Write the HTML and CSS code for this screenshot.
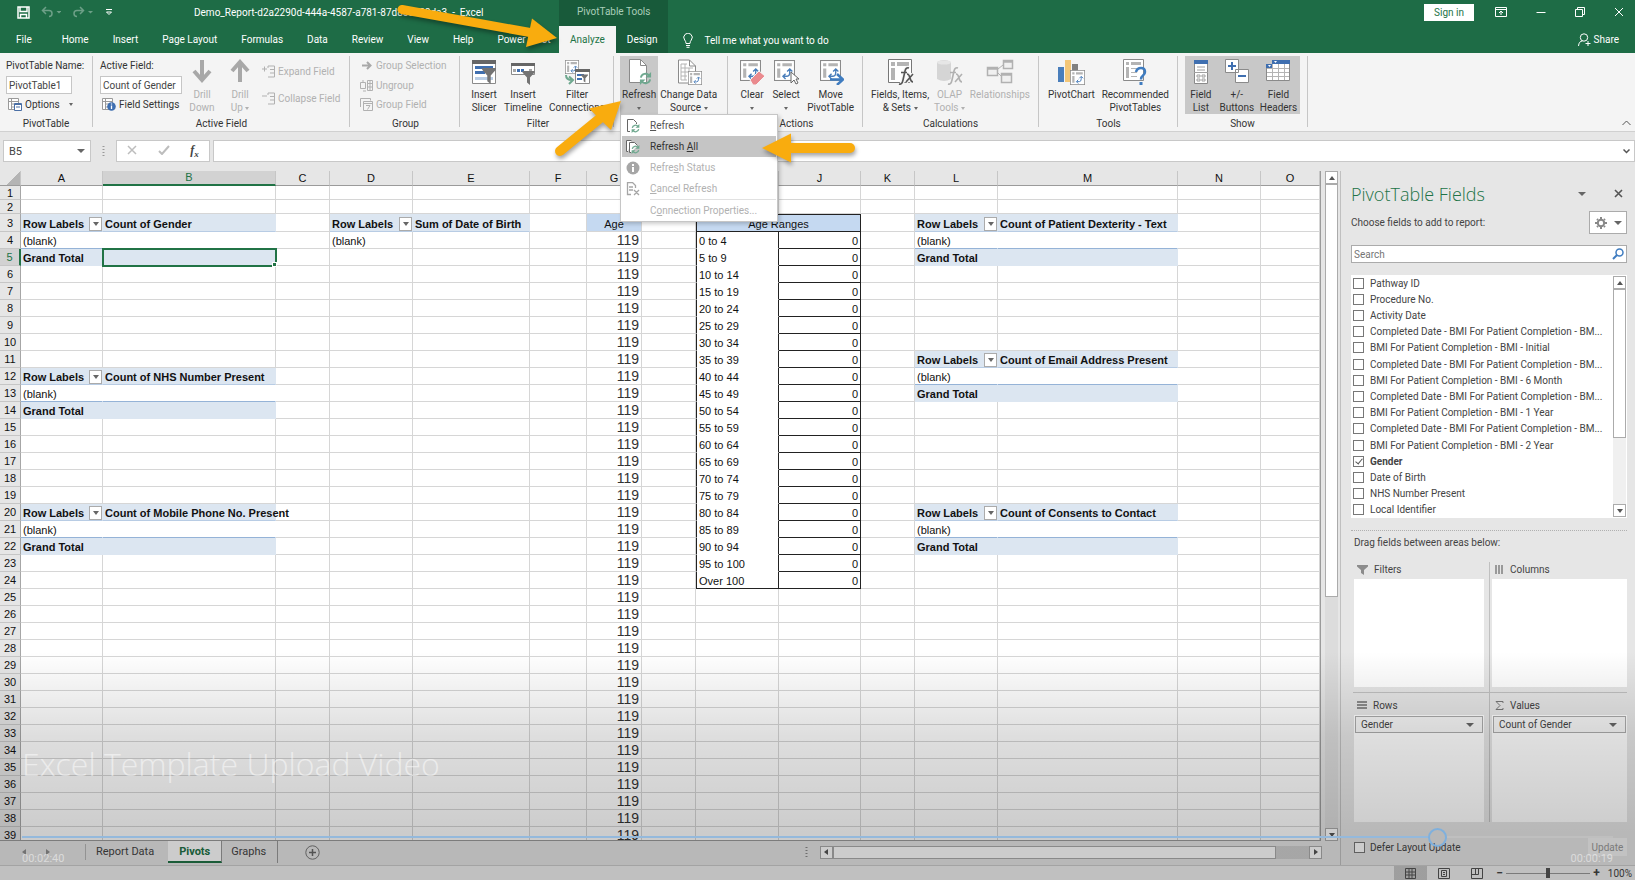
FILE: index.html
```html
<!DOCTYPE html>
<html lang="en">
<head>
    <meta charset="UTF-8">
    <title>Demo_Report - Excel</title>
    <link rel="stylesheet" href="styles.css">
</head>
<body>
<svg class="defs" width="0" height="0">
    <symbol id="pivot" viewBox="0 0 20 20">
        <rect x=".5" y=".5" width="19" height="19" fill="#fff" stroke="#8a8a8a"/>
        <path d="M3 3h3v3H3zM8 3h9v3H8zM3 8h3v9H3z" fill="#b4b4b4"/>
        <path d="M9 15.500h3.500q2.500 0 2.500-4V9M11 13l-2.500 2.500L11 18M12.500 11L15 8.500l2.500 2.500" fill="none" stroke="#4a7ebb" stroke-width="1.300"/>
    </symbol>
    <symbol id="cycle" viewBox="0 0 14 14">
        <path d="M2 6a5 5 0 0 1 9-2M12 8a5 5 0 0 1-9 2" fill="none" stroke="#6fa88f" stroke-width="2"/>
        <path d="M13 0v6H7zM1 14V8h6z" fill="#6fa88f"/>
    </symbol>
    <symbol id="page" viewBox="0 0 18 24">
        <path d="M.5.5h11l6 6v17H.5z" fill="#fff" stroke="#8a8a8a"/>
        <path d="M11.500.5v6h6" fill="none" stroke="#8a8a8a"/>
    </symbol>
    <symbol id="funnel" viewBox="0 0 12 14">
        <path d="M0 0h12v1.500L7.500 6.500V14L4.500 11.500v-5L0 1.500z" fill="#737373"/>
    </symbol>
</svg>

<header class="titlebar">
    <div class="head-left">
        <div class="quick">
            <button class="qbtn" aria-label="Save"><svg width="13" height="13" viewBox="0 0 13 13"><path d="M1 1h11v11H1zM3 1v4.500h7V1M3.500 12V8.500h6V12" fill="none" stroke="#fff" stroke-width="1.500"/></svg></button>
            <button class="qbtn dim" aria-label="Undo"><svg width="20" height="12" viewBox="0 0 20 12"><path d="M5 1L1.500 4.500 5 8M2 4.500h6q3 0 3 3t-3 3" fill="none" stroke="#fff" stroke-width="1.500"/><path d="M15.500 5h5l-2.500 2.500z" fill="#fff"/></svg></button>
            <button class="qbtn dim" aria-label="Redo"><svg width="22" height="12" viewBox="0 0 22 12"><path d="M8 1l3.500 3.500L8 8M11 4.500H5q-3 0-3 3t3 3" fill="none" stroke="#fff" stroke-width="1.500"/><path d="M16 5h5l-2.500 2.500z" fill="#fff"/></svg></button>
            <button class="qbtn" aria-label="Customize"><svg width="8" height="7" viewBox="0 0 8 7"><path d="M1 .5h6M1.500 3h5L4 5.500z" fill="none" stroke="#fff"/></svg></button>
            <span class="doc-title">Demo_Report-d2a2290d-444a-4587-a781-87d8c5b28da3 &nbsp;-&nbsp; Excel</span>
        </div>
        <nav class="tabs">
            <a href="#" class="file">File</a>
            <a href="#">Home</a>
            <a href="#">Insert</a>
            <a href="#">Page Layout</a>
            <a href="#">Formulas</a>
            <a href="#">Data</a>
            <a href="#">Review</a>
            <a href="#">View</a>
            <a href="#">Help</a>
            <a href="#">Power Pivot</a>
        </nav>
    </div>
    <div class="head-context">
        <div class="context-title">PivotTable Tools</div>
        <nav class="tabs">
            <a href="#" class="active">Analyze</a>
            <a href="#">Design</a>
        </nav>
    </div>
    <div class="head-right">
        <div class="window-row">
            <button class="signin">Sign in</button>
            <button class="win" aria-label="Ribbon display"><svg width="12" height="10" viewBox="0 0 12 10"><path d="M.5.5h11v9H.5zM.5 2.500h11M6 8V4.500M4 6l2-2 2 2" fill="none" stroke="#fff"/></svg></button>
            <button class="win" aria-label="Minimize"><svg width="10" height="10" viewBox="0 0 10 10"><path d="M.5 5.500h9" stroke="#fff"/></svg></button>
            <button class="win" aria-label="Restore"><svg width="10" height="10" viewBox="0 0 10 10"><path d="M.5 2.500h7v7h-7zM2.500 2.500v-2h7v7h-2" fill="none" stroke="#fff"/></svg></button>
            <button class="win" aria-label="Close"><svg width="10" height="10" viewBox="0 0 10 10"><path d="M1 1l8 8M9 1L1 9" stroke="#fff"/></svg></button>
        </div>
        <div class="tell-row">
            <svg width="10" height="15" viewBox="0 0 10 15"><path d="M3 10.500Q3 8.500 1.700 7A4.200 4.200 0 1 1 8.300 7Q7 8.500 7 10.500zM3 12.500h4M3.500 14.300h3" fill="none" stroke="#fff"/></svg>
            <a href="#">Tell me what you want to do</a>
            <a href="#" class="share"><svg width="13" height="14" viewBox="0 0 13 14"><circle cx="6" cy="4.500" r="3.700" fill="none" stroke="#fff"/><path d="M.5 13q.5-5 4-5M7.500 10.500h5M10 8v5" fill="none" stroke="#fff"/></svg>Share</a>
        </div>
    </div>
</header>

<section class="ribbon">
    <div class="group g-name">
        <div class="body">
            <div class="stack">
                <label for="ptname">PivotTable Name:</label>
                <input id="ptname" class="name-input" value="PivotTable1">
                <button class="small"><svg width="14" height="13" viewBox="0 0 14 13"><path d="M.5.5h10v11H.5zM.5 3.500h10M3.500.5v11M3.500 6h7M3.500 9h7" fill="#fff" stroke="#9a9a9a"/><path d="M6.500 5.500h7v7h-7z" fill="#fff" stroke="#4a6fa5"/><path d="M6.500 6.500h7M8 9h4" stroke="#4a6fa5"/></svg>Options<i class="caret far"></i></button>
            </div>
        </div>
        <div class="caption">PivotTable</div>
    </div>
    <div class="group g-active">
        <div class="body">
            <div class="stack">
                <label for="afield">Active Field:</label>
                <input id="afield" class="field-input" value="Count of Gender">
                <button class="small"><svg width="14" height="13" viewBox="0 0 14 13"><path d="M.5.5h10v11H.5zM.5 3.500h10M3.500.5v11M3.500 6h7M3.500 9h7" fill="#fff" stroke="#9a9a9a"/><circle cx="9.500" cy="8.500" r="4.300" fill="#3f6fb0"/><path d="M9.500 7.500v3.500M9.500 5.500v1" stroke="#fff" stroke-width="1.300"/></svg>Field Settings</button>
            </div>
            <button class="big off drill"><svg width="20" height="26" viewBox="0 0 20 26"><path d="M10 1v19M2 12l8 9 8-9" fill="none" stroke="#a8a8a8" stroke-width="4"/></svg><span>Drill<br>Down</span></button>
            <button class="big off drill"><svg width="20" height="26" viewBox="0 0 20 26"><path d="M10 23V4M2 12l8-9 8 9" fill="none" stroke="#a8a8a8" stroke-width="4"/></svg><span>Drill<br>Up <i class="caret"></i></span></button>
            <div class="stack two">
                <button class="small off"><svg width="13" height="13" viewBox="0 0 13 13"><path d="M0 4h5M2.500 1.500v5M6 1h6.500M8 4.500h4.500M8 8h4.500M6 12h6.500M6 1v2M12.500 1v11" fill="none" stroke="#b1b1b1"/></svg>Expand Field</button>
                <button class="small off"><svg width="13" height="13" viewBox="0 0 13 13"><path d="M0 4h5M6 1h6.500M8 4.500h4.500M8 8h4.500M6 12h6.500M6 1v2M12.500 1v11" fill="none" stroke="#b1b1b1"/></svg>Collapse Field</button>
            </div>
        </div>
        <div class="caption">Active Field</div>
    </div>
    <div class="group g-group">
        <div class="body">
            <div class="stack">
                <button class="small off"><svg width="13" height="13" viewBox="0 0 13 13"><path d="M2 6.500h8M7 3l3.500 3.500L7 10" fill="none" stroke="#a8a8a8" stroke-width="2"/></svg>Group Selection</button>
                <button class="small off"><svg width="13" height="13" viewBox="0 0 13 13"><path d="M.5 3.500h5v6h-5zM7.500 1.500h5v10h-5zM7.500 4.500h5M7.500 8h5M10 1.500v10M3 1v2M3 12h3" fill="none" stroke="#b1b1b1"/></svg>Ungroup</button>
                <button class="small off"><svg width="13" height="13" viewBox="0 0 13 13"><path d="M.5 9V.5h10v2M3.500 3.500h9v9h-9zM3.500 5.500h9M6 7.500h4l-2.500 4" fill="none" stroke="#b1b1b1"/></svg>Group Field</button>
            </div>
        </div>
        <div class="caption">Group</div>
    </div>
    <div class="group g-filter">
        <div class="body">
            <button class="big"><svg width="26" height="26" viewBox="0 0 26 26"><path d="M1.500 1.500h23v23h-23z" fill="#fff" stroke="#8a8a8a"/><path d="M1 1h24v4H1z" fill="#666"/><path d="M4 7h18v3H4zM4 12h10v3H4z" fill="#3f6fb0"/><path d="M4 18h18v3H4z" fill="#b9cde5"/><use href="#funnel" x="11" y="9" width="14" height="16"/></svg><span>Insert<br>Slicer</span></button>
            <button class="big"><svg width="26" height="26" viewBox="0 0 26 26"><path d="M1.500 4.500h23v11h-23z" fill="#fff" stroke="#8a8a8a"/><path d="M1 4h24v3H1z" fill="#666"/><path d="M3 10h3v3H3zM19 10h3v3h-3z" fill="#a6a6a6"/><path d="M7 10h3v3H7zM11 10h3v3h-3z" fill="#3f6fb0"/><use href="#funnel" x="12" y="12" width="13" height="14"/></svg><span>Insert<br>Timeline</span></button>
            <button class="big"><svg width="26" height="26" viewBox="0 0 26 26"><use href="#pivot" x="1" y="1" width="14" height="14"/><path d="M11.500 10.500h14v14h-14z" fill="#fff" stroke="#8a8a8a"/><path d="M11 10h15v3H11z" fill="#666"/><path d="M13 15h7v2h-7zM13 19h5v2h-5z" fill="#3f6fb0"/><use href="#funnel" x="17" y="15" width="7" height="9"/><path d="M2 16q0 5 6 5M5 17.500L9 21l-4 4" fill="none" stroke="#6fa88f" stroke-width="2"/></svg><span>Filter<br>Connections</span></button>
        </div>
        <div class="caption">Filter</div>
    </div>
    <div class="group g-data">
        <div class="body">
            <div class="menu-host">
                <button class="big pressed"><svg width="26" height="26" viewBox="0 0 26 26"><use href="#page" x="3" y="0" width="18" height="24"/><use href="#cycle" x="13" y="13" width="13" height="13"/></svg><span>Refresh<br><i class="caret"></i></span></button>
                <div class="menu">
                    <button><svg width="14" height="14" viewBox="0 0 14 14"><path d="M4 12.500H1.500v-12h6l3 3V5" fill="#fff" stroke="#666"/><use href="#cycle" x="5" y="5" width="9" height="9"/></svg><span><u>R</u>efresh</span></button>
                    <button class="hover"><svg width="14" height="14" viewBox="0 0 14 14"><path d="M2 11.500H.5V.5h5M5 12.500H3.500v-10h5l3 3" fill="#fff" stroke="#666"/><use href="#cycle" x="5" y="5" width="9" height="9"/></svg><span>Refresh <u>A</u>ll</span></button>
                    <button class="off"><svg width="14" height="14" viewBox="0 0 14 14"><circle cx="7" cy="7" r="6.500" fill="#a6a6a6"/><path d="M7 6v5M7 3v2" stroke="#fff" stroke-width="2"/></svg><span>Refre<u>s</u>h Status</span></button>
                    <button class="off"><svg width="14" height="14" viewBox="0 0 14 14"><path d="M5 12.500H1.500v-12h5l3 3V6M3 5h4M3 8h4M8 8l5 5M13 8l-5 5" fill="none" stroke="#a6a6a6" stroke-width="1.300"/></svg><span><u>C</u>ancel Refresh</span></button>
                    <hr>
                    <button class="off"><i class="blank"></i><span>C<u>o</u>nnection Properties...</span></button>
                </div>
            </div>
            <button class="big"><svg width="26" height="26" viewBox="0 0 26 26"><use href="#page" x="2" y="0" width="18" height="25"/><path d="M5 5h6M5 9h12M5 13h8M5 17h6M5 21h6M5 5v16M9 5v16M13 9v4" stroke="#b4b4b4"/><use href="#pivot" x="12" y="12" width="14" height="14"/></svg><span>Change Data<br>Source <i class="caret"></i></span></button>
        </div>
    </div>
    <div class="group g-actions">
        <div class="body">
            <button class="big"><svg width="26" height="26" viewBox="0 0 26 26"><use href="#pivot" x="1" y="1" width="21" height="21"/><path d="M11 21l9-9 6 5-9 9h-3z" fill="#ea8a8e" stroke="#f5f5f5"/></svg><span>Clear<br><i class="caret"></i></span></button>
            <button class="big"><svg width="26" height="26" viewBox="0 0 26 26"><use href="#pivot" x="1" y="1" width="21" height="21"/><path d="M18 13v11l3-3 2 4 2-1-2-4h3z" fill="#fff" stroke="#666"/></svg><span>Select<br><i class="caret"></i></span></button>
            <button class="big"><svg width="26" height="26" viewBox="0 0 26 26"><use href="#pivot" x="2" y="1" width="21" height="21"/><path d="M12 20.500h12M19 15l6 5.500-6 5.500" fill="none" stroke="#3f7cc0" stroke-width="2.500"/></svg><span>Move<br>PivotTable</span></button>
        </div>
        <div class="caption">Actions</div>
    </div>
    <div class="group g-calc">
        <div class="body">
            <button class="big"><svg width="28" height="26" viewBox="0 0 28 26"><path d="M2.500.5h23v23h-23z" fill="#fff" stroke="#777"/><path d="M5 3h4v4H5zM11 3h12v4H11zM5 9h4v12H5z" fill="#b4b4b4"/><path d="M13 25q3 2 4-4l2-9q1-4 4-3M15 13.500h6M20 23l7-8M21 15q2 0 3 4t3 4" fill="none" stroke="#f5f5f5" stroke-width="4"/><path d="M13 25q3 1 4-4l2-9q1-4 4-3M15 13.500h6M20 23l7-8M21 15q2 0 3 4t3 4" fill="none" stroke="#555" stroke-width="1.600"/></svg><span>Fields, Items,<br>&amp; Sets <i class="caret"></i></span></button>
            <button class="big off"><svg width="28" height="26" viewBox="0 0 28 26"><path d="M2 3q7-4 14 0v17q-7 4-14 0z" fill="#d5d5d5"/><ellipse cx="9" cy="3.500" rx="7" ry="2" fill="#e6e6e6"/><path d="M13 25q3 1 4-4l2-9q1-4 4-3M15 13.500h6M20 23l7-8M21 15q2 0 3 4t3 4" fill="none" stroke="#b1b1b1" stroke-width="1.600"/></svg><span>OLAP<br>Tools <i class="caret"></i></span></button>
            <button class="big off"><svg width="28" height="26" viewBox="0 0 28 26"><path d="M1.500 8.500h10v8h-10zM17.500 1.500h9v8h-9zM15.500 14.500h10v9h-10zM1 10h11M17 3h10M15 16h11" fill="#f0f0f0" stroke="#b1b1b1" stroke-width="1.500"/><path d="M12 10l5-4M12 14l4 4" stroke="#b1b1b1"/></svg><span>Relationships</span></button>
        </div>
        <div class="caption">Calculations</div>
    </div>
    <div class="group g-tools">
        <div class="body">
            <button class="big"><svg width="28" height="26" viewBox="0 0 28 26"><path d="M1 8h6v15H1z" fill="#4a7ebb"/><path d="M8 1h6v22H8z" fill="#f3c677"/><path d="M15 5h6v8h-6z" fill="#808080"/><use href="#pivot" x="13" y="11" width="15" height="15"/></svg><span>PivotChart</span></button>
            <button class="big"><svg width="28" height="26" viewBox="0 0 28 26"><path d="M2.500.5h20v21h-20z" fill="#fff" stroke="#8a8a8a"/><path d="M5 3h3v3H5zM10 3h10v3H10zM5 8h3v11H5zM10 9h10v1H10zM10 13h6v1h-6zM10 17h6v1h-6z" fill="#b4b4b4"/><path d="M15 13q1-4 5-4t4 4q0 2-2 3.500t-2 4" fill="none" stroke="#3f7cc0" stroke-width="2.500"/><path d="M18.500 23h3v3h-3z" fill="#3f7cc0"/></svg><span>Recommended<br>PivotTables</span></button>
        </div>
        <div class="caption">Tools</div>
    </div>
    <div class="group g-show">
        <div class="body">
            <button class="big pressed"><svg width="26" height="26" viewBox="0 0 26 26"><path d="M6.500 1.500h13v23h-13z" fill="#fff" stroke="#8a8a8a"/><path d="M6 1h14v4H6z" fill="#3f6fb0"/><path d="M9 8h8M9 11h8M6 13.500h14M9 16h3v2H9zM14 16h3v2h-3zM9 20h3v2H9zM14 20h3v2h-3z" fill="none" stroke="#a0a0a0"/></svg><span>Field<br>List</span></button>
            <button class="big pressed"><svg width="26" height="26" viewBox="0 0 26 26"><path d="M1.500.5h13v13h-13zM11.500 10.500h13v13h-13z" fill="#fff" stroke="#8a8a8a"/><path d="M4 7h8M8 3v8M14 17h8" stroke="#3f6fb0" stroke-width="2"/></svg><span>+/-<br>Buttons</span></button>
            <button class="big pressed"><svg width="26" height="26" viewBox="0 0 26 26"><path d="M1.500 5.500h6v-4h17v20h-23z" fill="#fff" stroke="#8a8a8a"/><path d="M1 5h6v4H1zM7 1h18v4H7z" fill="#3f6fb0"/><path d="M3 6h3L4.500 8zM9 2h3l-1.500 2z" fill="#fff"/><path d="M2 9.500h22M2 13.500h22M2 17.500h22M7.500 5v16M13.500 5v16M19.500 5v16" stroke="#b4b4b4"/></svg><span>Field<br>Headers</span></button>
        </div>
        <div class="caption">Show</div>
    </div>
    <button class="collapse" aria-label="Collapse ribbon"><svg width="9" height="6" viewBox="0 0 9 6"><path d="M.5 5l4-4 4 4" fill="none" stroke="#555"/></svg></button>
</section>

<section class="formula">
    <label class="namebox"><input value="B5" aria-label="Name box"><i class="caret big-caret"></i></label>
    <svg class="dots" width="3" height="12" viewBox="0 0 3 12"><path d="M1.500 1v10" stroke="#999" stroke-width="2" stroke-dasharray="1 2"/></svg>
    <div class="fx">
        <button aria-label="Cancel"><svg width="10" height="10" viewBox="0 0 10 10"><path d="M1 1l8 8M9 1L1 9" stroke="#bdbdbd" stroke-width="1.500"/></svg></button>
        <button aria-label="Enter"><svg width="12" height="10" viewBox="0 0 12 10"><path d="M1 6l3 3 7-8" fill="none" stroke="#bdbdbd" stroke-width="2"/></svg></button>
        <button class="fxb">f<sub>x</sub></button>
    </div>
    <div class="formula-field"><input aria-label="Formula"><svg width="7" height="5" viewBox="0 0 7 5"><path d="M.5.5l3 3 3-3" fill="none" stroke="#555" stroke-width="1.500"/></svg></div>
</section>

<main class="work">
    <div class="book">
        <div class="sheet-row">
            <div class="sheet"><table id="grid"></table></div>
            <div class="vscroll">
                <button aria-label="Scroll up"><i class="tri up"></i></button>
                <div class="thumb"></div>
                <div class="rest"></div>
                <button aria-label="Scroll down"><i class="tri down"></i></button>
            </div>
        </div>
        <div class="sheet-tabs">
            <span class="sheet-nav"><i class="tri left"></i><i class="tri right"></i></span>
            <a href="#" class="first">Report Data</a>
            <a href="#" class="current">Pivots</a>
            <a href="#" class="last">Graphs</a>
            <button class="add" aria-label="New sheet"><svg width="15" height="15" viewBox="0 0 15 15"><circle cx="7.500" cy="7.500" r="6.700" fill="none" stroke="#777"/><path d="M4 7.500h7M7.500 4v7" stroke="#666" stroke-width="1.500"/></svg></button>
            <svg class="split" width="3" height="12" viewBox="0 0 3 12"><path d="M1.500 1v10" stroke="#888" stroke-width="2" stroke-dasharray="1 2"/></svg>
            <div class="hscroll">
                <button aria-label="Scroll left"><i class="tri left"></i></button>
                <div class="thumb"></div>
                <div class="rest"></div>
                <button aria-label="Scroll right"><i class="tri right"></i></button>
            </div>
        </div>
    </div>

    <aside class="pane">
        <div class="pane-head">
            <h2>PivotTable Fields</h2>
            <i class="caret big-caret"></i>
            <button aria-label="Close pane"><svg width="9" height="9" viewBox="0 0 9 9"><path d="M1 1l7 7M8 1L1 8" stroke="#555" stroke-width="1.600"/></svg></button>
        </div>
        <div class="choose">
            <span>Choose fields to add to report:</span>
            <button class="gear" aria-label="Tools"><svg width="12" height="12" viewBox="0 0 12 12"><circle cx="6" cy="6" r="3.200" fill="none" stroke="#888" stroke-width="2"/><path d="M6 0v2M6 10v2M0 6h2M10 6h2M2 2l1 1M9 9l1 1M2 10l1-1M9 3l1-1" stroke="#888" stroke-width="2"/></svg><i class="caret big-caret"></i></button>
        </div>
        <div class="search">
            <input type="text" placeholder="Search" aria-label="Search">
            <svg width="12" height="12" viewBox="0 0 12 12"><circle cx="7.500" cy="4.500" r="3.500" fill="none" stroke="#3f7cc0" stroke-width="1.500"/><path d="M5 7l-4 4" stroke="#3f7cc0" stroke-width="2"/></svg>
        </div>
        <div class="fields">
            <div class="field-list" id="fields"></div>
            <div class="vscroll">
                <button aria-label="Scroll up"><i class="tri up"></i></button>
                <div class="thumb"></div>
                <div class="rest"></div>
                <button aria-label="Scroll down"><i class="tri down"></i></button>
            </div>
        </div>
        <div class="drag">Drag fields between areas below:</div>
        <div class="areas">
            <div class="area">
                <h3><svg width="11" height="10" viewBox="0 0 11 10"><path d="M0 0h11v1.500L7 5v5L4 8V5L0 1.500z" fill="#8c8c8c"/></svg>Filters</h3>
                <div class="box"></div>
            </div>
            <div class="area right">
                <h3><svg width="9" height="9" viewBox="0 0 9 9"><path d="M0 0h2v9H0zM3 0h2v9H3zM6 0h2v9H6z" fill="#999"/></svg>Columns</h3>
                <div class="box"></div>
            </div>
            <div class="area low">
                <h3><svg width="10" height="9" viewBox="0 0 10 9"><path d="M0 0h10v2H0zM0 3h10v2H0zM0 6h10v2H0z" fill="#8c8c8c"/></svg>Rows</h3>
                <div class="box"><button>Gender<i class="caret big-caret"></i></button></div>
            </div>
            <div class="area right low">
                <h3><svg width="9" height="9" viewBox="0 0 9 9"><path d="M8 2V.5H1L5 4.500 1 8.500h7V7" fill="none" stroke="#777"/></svg>Values</h3>
                <div class="box"><button>Count of Gender<i class="caret big-caret"></i></button></div>
            </div>
        </div>
        <div class="defer">
            <label><input type="checkbox">Defer Layout Update</label>
            <button disabled>Update</button>
        </div>
    </aside>
</main>

<footer class="status">
    <button class="view on" aria-label="Normal"><svg width="11" height="11" viewBox="0 0 11 11"><path d="M.5.5h10v10H.5zM.5 4h10M.5 7h10M4 .5v10M7 .5v10" fill="none" stroke="#555"/></svg></button>
    <button class="view" aria-label="Page layout"><svg width="12" height="11" viewBox="0 0 12 11"><path d="M.5.5h11v10H.5zM3.500 2.500h5v6h-5zM5 4.500h2M5 6.500h2" fill="none" stroke="#555"/></svg></button>
    <button class="view" aria-label="Page break"><svg width="12" height="11" viewBox="0 0 12 11"><path d="M.5.5h11v10H.5zM4.500.5v6M7.500.5v6M.5 6.500h7" fill="none" stroke="#555"/></svg></button>
    <span>−</span>
    <input type="range" aria-label="Zoom">
    <span>+</span>
    <span class="pct">100%</span>
</footer>

<!-- video player chrome on top of the window -->
<div class="player">
    <div class="video-title">Excel Template Upload Video</div>
    <div class="track"><div class="played"></div><div class="knob"></div><div class="left-over"></div></div>
    <div class="times"><span>00:02:40</span><span>00:00:19</span></div>
</div>

<svg class="arrows" width="900" height="200" viewBox="0 0 900 200">
    <g fill="#f9ac0e" stroke="#f9ac0e">
        <path d="M402 9.500L530 32.500" stroke-width="9" stroke-linecap="round"/>
        <path d="M557 38L532 18.500 526 47z" stroke="none"/>
        <path d="M560 151L604 115" stroke-width="10" stroke-linecap="round"/>
        <path d="M621 101L589 108.500 611 130z" stroke="none"/>
        <path d="M785 148h65" stroke-width="10" stroke-linecap="round"/>
        <path d="M762 148l29-14.500v29z" stroke="none"/>
    </g>
</svg>

<script>
    var cols = 'ABCDEFGHIJKLMNO'.split('');
    // column widths, the last column takes what is left
    var widths = [82, 173, 54, 83, 117, 57, 55, 54, 83, 82, 54, 83, 180, 83];
    var cells = {};

    // one small pivot table: header, (blank) line and grand total
    function addPivot(left, right, row, title, total) {
        cells[left + row] = {html: '<div class="rl"><span>Row Labels</span><button class="drop" aria-label="Filter"><i class="caret"></i></button></div>', cls: 'ph'};
        cells[right + row] = {html: title, cls: 'ph'};
        cells[left + (row + 1)] = {html: '(blank)', cls: total ? 'pb' : ''};
        if (total) {
            cells[right + (row + 1)] = {html: '', cls: 'pb'};
            cells[left + (row + 2)] = {html: 'Grand Total', cls: 'pt'};
            cells[right + (row + 2)] = {html: '', cls: 'pt'};
        }
    }
    addPivot('A', 'B', 3, 'Count of Gender', true);
    addPivot('A', 'B', 12, 'Count of NHS Number Present', true);
    addPivot('A', 'B', 20, 'Count of Mobile Phone No. Present', true);
    addPivot('D', 'E', 3, 'Sum of Date of Birth', false);
    addPivot('L', 'M', 3, 'Count of Patient Dexterity - Text', true);
    addPivot('L', 'M', 11, 'Count of Email Address Present', true);
    addPivot('L', 'M', 20, 'Count of Consents to Contact', true);
    cells.B5 = {html: '<i class="handle"></i>', cls: 'pt selected'};

    // age column and age ranges
    cells.G3 = {html: 'Age', cls: 'age-head'};
    for (var r = 4; r <= 39; r++) {
        cells['G' + r] = {html: '119', cls: 'age'};
    }
    cells.I3 = {html: 'Age Ranges', cls: 'range-head', span: 2};
    for (r = 4; r <= 24; r++) {
        var low = (r - 4) * 5;
        var text = low + ' to ' + (low + 4);
        if (r == 23) text = '95 to 100';
        if (r == 24) text = 'Over 100';
        cells['I' + r] = {html: text, cls: r == 24 ? 'range end' : 'range'};
        cells['J' + r] = {html: '0', cls: 'num'};
    }

    var out = '<colgroup><col style="width:21px">';
    for (var i = 0; i < cols.length; i++) {
        out += widths[i] ? '<col style="width:' + widths[i] + 'px">' : '<col>';
    }
    out += '</colgroup><thead><tr><th class="corner"></th>';
    for (i = 0; i < cols.length; i++) {
        out += '<th class="' + (cols[i] == 'B' ? 'on' : '') + '">' + cols[i] + '</th>';
    }
    out += '</tr></thead><tbody>';
    for (r = 1; r <= 39; r++) {
        var size = r < 3 ? 'short' : r == 3 ? 'tall' : '';
        out += '<tr class="' + size + '"><th class="' + (r == 5 ? 'on' : '') + '">' + r + '</th>';
        for (i = 0; i < cols.length; i++) {
            var c = cells[cols[i] + r] || {html: '', cls: ''};
            out += '<td class="' + c.cls + '"' + (c.span ? ' colspan="2"' : '') + '>' + c.html + '</td>';
            if (c.span) i++;
        }
        out += '</tr>';
    }
    document.getElementById('grid').innerHTML = out + '</tbody>';

    var names = ['Pathway ID', 'Procedure No.', 'Activity Date',
        'Completed Date - BMI For Patient Completion - BM...', 'BMI For Patient Completion - BMI - Initial',
        'Completed Date - BMI For Patient Completion - BM...', 'BMI For Patient Completion - BMI - 6 Month',
        'Completed Date - BMI For Patient Completion - BM...', 'BMI For Patient Completion - BMI - 1 Year',
        'Completed Date - BMI For Patient Completion - BM...', 'BMI For Patient Completion - BMI - 2 Year',
        'Gender', 'Date of Birth', 'NHS Number Present', 'Local Identifier'];
    var list = '';
    for (i = 0; i < names.length; i++) {
        var on = names[i] == 'Gender';
        list += '<label' + (on ? ' class="on"' : '') + '><input type="checkbox"' + (on ? ' checked' : '') + '>' + names[i] + '</label>';
    }
    document.getElementById('fields').innerHTML = list;
</script>
</body>
</html>
```
FILE: styles.css
```css
* {
    box-sizing: border-box;
}

body {
    margin: 0;
    height: 100vh;
    display: flex;
    flex-direction: column;
    overflow: hidden;
    background-color: #e6e6e6;
    font-family: Roboto, "Noto Sans", sans-serif;
    font-size: 10px;
    line-height: 13px;
    color: #444444;
    position: relative;
}

button, input {
    font: inherit;
    color: inherit;
    border: 0;
    padding: 0;
    margin: 0;
    background: none;
}

a {
    color: inherit;
    text-decoration: none;
}

svg {
    flex: none;
}

.defs {
    position: absolute;
}

.caret {
    display: inline-block;
    border: 2px solid transparent;
    border-top: 3px solid #666666;
    border-bottom: 0;
    vertical-align: middle;
}

.big-caret {
    border-width: 4px 4px 0;
}

.tri {
    border: 3px solid transparent;
}

.up {
    border-top: 0;
    border-bottom: 4px solid #555555;
}

.down {
    border-bottom: 0;
    border-top: 4px solid #555555;
}

.left {
    border-left: 0;
    border-right: 4px solid #555555;
}

.right.tri {
    border-right: 0;
    border-left: 4px solid #555555;
}

/* title bar */
.titlebar {
    display: flex;
    flex: none;
    height: 53px;
    background-color: #1e6c46;
    color: #ffffff;
}

.head-left {
    flex: 0 0 559px;
    min-width: 0;
    display: flex;
    flex-direction: column;
}

.quick {
    height: 26px;
    display: flex;
    align-items: center;
    padding: 0 0 2px 17px;
}

.qbtn {
    display: flex;
    margin-right: 11px;
}

.dim {
    opacity: 0.35;
}

.doc-title {
    margin-left: 70px;
    white-space: pre;
}

.tabs {
    display: flex;
    height: 27px;
}

.tabs a {
    padding: 1px 11px 0;
    line-height: 26px;
    white-space: nowrap;
}

.head-left .tabs a {
    padding: 1px 12px 0 11px;
}

.head-left .tabs .file {
    padding: 1px 18px 0 16px;
}

.head-left .tabs {
    gap: 1px;
}

.head-context {
    background-color: #185a3a;
}

.context-title {
    height: 26px;
    line-height: 24px;
    text-align: center;
    color: #a9cdb9;
}

.tabs .active {
    background-color: #f4f4f4;
    color: #217346;
}

.head-right {
    flex: 1;
}

.window-row {
    height: 26px;
    display: flex;
    justify-content: flex-end;
    align-items: center;
    padding: 0 11px 2px 0;
}

.signin {
    width: 50px;
    height: 17px;
    background-color: #ffffff;
    color: #217346;
    margin-right: 21px;
}

.win {
    display: flex;
    margin-left: 29px;
}

.signin + .win {
    margin-left: 0;
}

.tell-row {
    display: flex;
    align-items: center;
    height: 27px;
    gap: 11px;
    padding: 1px 16px 0 15px;
}

.share {
    margin-left: auto;
    display: flex;
    gap: 3px;
}

/* ribbon */
.ribbon {
    display: flex;
    flex: none;
    height: 79px;
    padding-top: 3px;
    background-color: #f4f4f4;
    border-bottom: 1px solid #d0d0d0;
    color: #333333;
}

.group {
    border-right: 1px solid #c6c6c6;
    height: 71px;
    padding: 0 6px;
}

.body {
    display: flex;
    height: 58px;
}

.caption {
    margin-top: 3px;
    line-height: 14px;
    text-align: center;
}

.stack {
    display: flex;
    flex-direction: column;
    align-items: flex-start;
    justify-content: space-between;
    padding: 3px 0;
}

.stack input {
    height: 18px;
    background-color: #ffffff;
    border: 1px solid #c6c6c6;
    padding: 0 2px;
    color: #444444;
}

.name-input {
    width: 66px;
}

.field-input {
    width: 82px;
}

.small {
    display: flex;
    align-items: center;
    gap: 3px;
    padding-left: 2px;
    height: 13px;
    white-space: nowrap;
}

.far {
    margin-left: 6px;
}

.two {
    padding: 9px 0;
}

.off {
    color: #b1b1b1;
}

.off .caret {
    border-top-color: #b1b1b1;
}

.big {
    display: flex;
    flex-direction: column;
    align-items: center;
    gap: 3px;
    height: 58px;
    padding: 3px 2px 0;
    white-space: nowrap;
}

.pressed {
    background-color: #c8c8c8;
}

.drill {
    width: 36px;
}

.g-name {
    flex: 0 0 93px;
}

.g-active {
    flex: 0 0 257px;
    padding-left: 7px;
}

.g-active .body {
    gap: 2px;
}

.g-group {
    flex: 0 0 110px;
    padding-left: 8px;
}

.g-filter {
    flex: 0 0 154px;
    padding-left: 9px;
}

.g-data {
    flex: 0 0 114px;
}

.g-actions {
    flex: 0 0 135px;
    padding-left: 9px;
}

.g-calc {
    flex: 0 0 176px;
}

.g-tools {
    flex: 0 0 139px;
    padding-left: 7px;
}

.g-show {
    flex: 0 0 130px;
}

.g-filter .body, .g-actions .body, .g-calc .body, .g-tools .body {
    justify-content: space-between;
}

.ribbon .g-show {
    padding: 0 7px;
}

.g-show .big {
    flex: 1 0 auto;
}

.menu-host {
    position: relative;
}

.menu {
    position: absolute;
    left: 0;
    top: 58px;
    width: 158px;
    padding: 0 1px;
    background-color: #ffffff;
    border: 1px solid #c6c6c6;
    box-shadow: 2px 2px 4px rgba(0, 0, 0, 0.2);
    color: #555555;
    z-index: 5;
}

.menu button {
    display: flex;
    align-items: center;
    gap: 10px;
    width: 100%;
    height: 21px;
    padding-left: 4px;
}

.menu .hover {
    background-color: #c5c5c5;
    color: #333333;
}

.menu hr {
    border: 0;
    border-top: 1px solid #e1e1e1;
    margin: 0 0 0 28px;
}

.blank {
    width: 14px;
}

.collapse {
    margin: auto 4px 2px auto;
}

/* formula bar */
.formula {
    display: flex;
    flex: none;
    align-items: center;
    padding: 8px 0 9px 3px;
}

.namebox, .fx, .formula-field {
    display: flex;
    align-items: center;
    height: 22px;
    background-color: #ffffff;
    border: 1px solid #c8c8c8;
}

.namebox {
    width: 88px;
    padding: 0 5px;
}

.namebox input {
    flex: 1;
    width: 0;
    font-size: 11px;
}

.dots {
    margin: 0 11px;
}

.fx {
    width: 94px;
    justify-content: space-around;
    margin-right: 3px;
}

.fxb {
    font: italic bold 12px "Liberation Serif", serif;
}

.fxb sub {
    font-size: 9px;
}

.formula-field {
    flex: 1;
    padding-right: 4px;
}

.formula-field input {
    flex: 1;
}

/* worksheet */
.work {
    flex: 1;
    display: flex;
    min-height: 0;
}

.book {
    flex: 1;
    min-width: 0;
    display: flex;
    flex-direction: column;
}

.sheet-row {
    flex: 1;
    min-height: 0;
    display: flex;
}

.sheet {
    flex: 1;
    min-width: 0;
    overflow: hidden;
    border-right: 1px solid #9b9b9b;
    border-bottom: 1px solid #9b9b9b;
}

#grid {
    width: 100%;
    table-layout: fixed;
    border-collapse: separate;
    border-spacing: 0;
    font-family: "Liberation Sans", Arial, sans-serif;
    font-size: 11px;
    line-height: 14px;
    color: #111111;
}

#grid th {
    padding: 0;
    font-weight: normal;
    background-color: #e6e6e6;
    border-right: 1px solid #a6a6a6;
    border-bottom: 1px solid #c6c6c6;
}

#grid thead th {
    height: 14px;
    border-right-color: #c6c6c6;
    border-bottom-color: #9b9b9b;
}

#grid th.on {
    background-color: #d2d2d2;
    color: #217346;
}

#grid thead th.on {
    border-bottom: 2px solid #217346;
    line-height: 13px;
}

#grid tbody th.on {
    border-right: 2px solid #217346;
}

#grid .corner {
    background-image: linear-gradient(135deg, transparent 60%, #b4b4b4 60%);
}

#grid td {
    height: 17px;
    padding: 2px 2px 0;
    border-right: 1px solid #d6d6d6;
    border-bottom: 1px solid #d6d6d6;
    background-color: #ffffff;
    white-space: nowrap;
}

#grid .short td, #grid .short th {
    height: 14px;
    line-height: 12px;
    padding-top: 0;
}

#grid .tall td {
    height: 18px;
}

#grid .ph, #grid .pt {
    background-color: #dce6f1;
    border-right-color: #dce6f1;
    font-weight: bold;
}

#grid .ph {
    border-bottom-color: #b8cce4;
}

#grid .pt {
    border-bottom-color: #dce6f1;
}

#grid .pb {
    border-right-color: #ffffff;
    border-bottom-color: #95b3d7;
}

.rl {
    display: flex;
    justify-content: space-between;
}

.drop {
    display: flex;
    align-items: center;
    justify-content: center;
    width: 13px;
    height: 14px;
    margin-right: -2px;
    background-color: #ffffff;
    border: 1px solid #ababab;
}

.drop .caret {
    border-width: 4px 3px 0;
}

#grid .selected {
    outline: 2px solid #217346;
    outline-offset: -1px;
    position: relative;
}

.handle {
    position: absolute;
    right: -2px;
    bottom: -2px;
    width: 5px;
    height: 5px;
    background-color: #217346;
    border: 1px solid #ffffff;
}

#grid .age-head {
    background-color: #c5d9f1;
    text-align: center;
}

#grid .age {
    text-align: right;
    font-size: 14px;
    padding-top: 0;
    color: #333333;
}

#grid .range-head {
    background-color: #c5d9f1;
    text-align: center;
    border: 1px solid #222222;
    padding-top: 1px;
}

#grid .range {
    border-left: 1px solid #222222;
    border-right-color: #222222;
    border-bottom-color: #ffffff;
}

#grid .num {
    text-align: right;
    border-right-color: #222222;
    border-bottom-color: #222222;
}

#grid .end {
    border-bottom-color: #222222;
}

/* scrollbars */
.vscroll {
    width: 13px;
    margin: 0 2px 0 4px;
    display: flex;
    flex-direction: column;
    background-color: #dcdcdc;
}

.vscroll button, .hscroll button {
    width: 13px;
    height: 13px;
    flex: none;
    display: flex;
    align-items: center;
    justify-content: center;
    background-color: #ffffff;
    border: 1px solid #ababab;
}

.thumb {
    background-color: #ffffff;
    border: 1px solid #ababab;
}

.vscroll .thumb {
    flex: 64;
}

.vscroll .rest {
    flex: 36;
}

.sheet-tabs {
    flex: none;
    display: flex;
    align-items: center;
    height: 24px;
    padding: 0 18px 2px 0;
    font-size: 11px;
}

.sheet-nav {
    display: flex;
    gap: 20px;
    width: 86px;
    padding-left: 22px;
    border-right: 1px solid #999999;
    height: 16px;
    align-items: center;
    opacity: 0.6;
}

.sheet-tabs a {
    padding: 0 11px;
    line-height: 22px;
    height: 22px;
}

.sheet-tabs .first {
    padding: 0 14px 0 10px;
}

.sheet-tabs .current {
    background-color: #ffffff;
    border-right: 1px solid #999999;
    border-bottom: 2px solid #217346;
    color: #217346;
    font-weight: bold;
}

.sheet-tabs .last {
    padding-left: 9px;
    border-right: 1px solid #999999;
}

.add {
    display: flex;
    margin-left: 27px;
}

.split {
    margin-left: auto;
    margin-right: 12px;
}

.hscroll {
    flex: 0 0 38%;
    display: flex;
    background-color: #d0d0d0;
}

.hscroll .thumb {
    flex: 93;
}

.hscroll .rest {
    flex: 7;
}

/* field pane */
.pane {
    flex: 0 0 295px;
    display: flex;
    flex-direction: column;
    border-left: 1px solid #c0c0c0;
    padding: 11px 8px 9px 10px;
}

.pane-head {
    display: flex;
    align-items: center;
    padding-right: 4px;
    gap: 28px;
}

.pane-head h2 {
    flex: 1;
    margin: 0;
    font: 300 18px/24px "Open Sans", sans-serif;
    color: #217346;
}

.choose {
    display: flex;
    justify-content: space-between;
    align-items: center;
    margin-top: 5px;
}

.gear {
    width: 38px;
    height: 23px;
    display: flex;
    align-items: center;
    justify-content: center;
    gap: 7px;
    background-color: #ffffff;
    border: 1px solid #ababab;
}

.search {
    display: flex;
    align-items: center;
    height: 18px;
    margin-top: 11px;
    padding: 0 2px;
    background-color: #ffffff;
    border: 1px solid #ababab;
}

.search input {
    flex: 1;
}

.fields {
    flex: none;
    display: flex;
    height: 243px;
    margin-top: 12px;
    background-color: #ffffff;
}

.field-list {
    flex: 1;
    display: flex;
    flex-direction: column;
    padding-left: 2px;
}

.field-list label {
    flex: 1;
    display: flex;
    align-items: center;
    gap: 6px;
    white-space: nowrap;
}

.field-list .on {
    font-weight: bold;
}

input[type="checkbox"] {
    appearance: none;
    width: 11px;
    height: 11px;
    border: 1px solid #777777;
    background-color: #ffffff;
}

input[type="checkbox"]:checked::after {
    content: "";
    display: block;
    width: 3px;
    height: 6px;
    margin: 0 auto;
    border: solid #555555;
    border-width: 0 1px 1px 0;
    transform: rotate(40deg);
}

.fields .vscroll {
    margin: 1px 1px 1px 0;
    background-color: #f0f0f0;
}

.fields .vscroll .thumb {
    flex: 69;
}

.fields .vscroll .rest {
    flex: 31;
}

.drag {
    margin-top: 12px;
    padding: 5px 0 0 3px;
    border-top: 1px dotted #b0b0b0;
}

.areas {
    flex: 1;
    display: grid;
    grid-template-columns: 1fr 1fr;
    grid-template-rows: 1fr 1fr;
    margin: 13px 0 16px 2px;
}

.area {
    display: flex;
    flex-direction: column;
    padding: 0 5px 5px 1px;
    border-right: 1px solid #c0c0c0;
}

.area.right {
    padding: 0 0 5px 2px;
    border-right: 0;
}

.area.low {
    border-top: 1px solid #c0c0c0;
    padding-top: 5px;
    padding-bottom: 0;
}

.area h3 {
    display: flex;
    align-items: center;
    gap: 6px;
    margin: 0;
    padding: 1px 0 3px 3px;
    font-size: 10px;
    line-height: 13px;
    font-weight: normal;
}

.box {
    flex: 1;
    background-color: #ffffff;
    padding: 1px;
}

.box button {
    display: flex;
    align-items: center;
    justify-content: space-between;
    width: 100%;
    height: 17px;
    padding: 0 8px 0 5px;
    background-color: #f6f6f6;
    border: 1px solid #ababab;
}

.defer {
    display: flex;
    justify-content: space-between;
    align-items: center;
    padding-left: 3px;
}

.defer label {
    display: flex;
    align-items: center;
    gap: 5px;
}

.defer button {
    width: 39px;
    height: 18px;
    background-color: #f2f2f2;
    color: #999999;
}

/* status bar */
.status {
    flex: none;
    display: flex;
    align-items: center;
    justify-content: flex-end;
    height: 15px;
    padding-right: 3px;
    background-color: #f0f0f0;
    border-top: 1px solid #cccccc;
}

.view {
    display: flex;
    align-items: center;
    justify-content: center;
    width: 33px;
    height: 15px;
}

.view.on {
    background-color: #c6c6c6;
}

.status span {
    font-size: 12px;
    font-weight: bold;
    width: 13px;
    text-align: center;
}

.status .pct {
    font-size: 10px;
    font-weight: normal;
    width: 25px;
    margin-left: 4px;
    text-align: right;
}

.status input {
    appearance: none;
    width: 84px;
    height: 1px;
    background-color: #999999;
}

.status input::-webkit-slider-thumb {
    appearance: none;
    width: 4px;
    height: 10px;
    background-color: #555555;
}

/* video player layer */
.player {
    position: absolute;
    left: 0;
    right: 0;
    bottom: 0;
    height: 240px;
    padding: 104px 22px 0;
    pointer-events: none;
    background-image: linear-gradient(rgba(0, 0, 0, 0) 5%, rgba(0, 0, 0, 0.13) 40%, rgba(0, 0, 0, 0.2) 80%, rgba(0, 0, 0, 0.2));
    color: rgba(255, 255, 255, 0.5);
}

.video-title {
    font: 300 32px/40px "Open Sans", sans-serif;
    color: rgba(255, 255, 255, 0.5);
}

.track {
    display: flex;
    align-items: center;
    height: 20px;
    margin-top: 43px;
}

.played {
    flex: 1406;
    height: 2px;
    background-color: #94b9dc;
}

.knob {
    width: 19px;
    height: 19px;
    border: 2px solid #7fb0dd;
    border-radius: 50%;
}

.left-over {
    flex: 166;
    height: 2px;
    background-color: rgba(255, 255, 255, 0.1);
}

.times {
    display: flex;
    justify-content: space-between;
    margin-top: 5px;
    font-size: 11px;
}

.arrows {
    position: absolute;
    left: 0;
    top: 0;
    z-index: 10;
    pointer-events: none;
    filter: drop-shadow(1px 3px 2px rgba(0, 0, 0, 0.35));
}
```
